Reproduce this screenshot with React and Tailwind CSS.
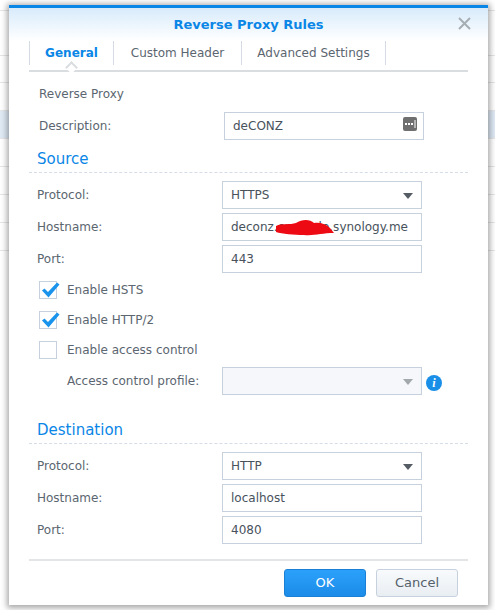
import React from 'react'

const font = "font-['DejaVu_Sans',sans-serif]"

function Field({ label, children, indent }) {
  return (
    <div className={`flex h-7 items-center ${indent ? 'pl-[58px]' : 'pl-[28px]'}`}>
      <span className="flex-1 text-[12px] text-[#5b6670]">{label}</span>
      {children}
    </div>
  )
}

function Box({ children, disabled }) {
  return (
    <div className={`relative flex h-7 w-[200px] items-center border border-[#c7d1de] pl-[8px] text-[12px] text-[#48525c] ${disabled ? 'bg-[#f5f7fa]' : 'bg-white'}`}>
      {children}
    </div>
  )
}

function Caret({ disabled }) {
  return (
    <span className={`absolute right-[8px] top-[11px] h-0 w-0 border-x-[5px] border-t-[6px] border-x-transparent ${disabled ? 'border-t-[#a3a8ad]' : 'border-t-[#555c63]'}`} />
  )
}

function Check({ checked, label }) {
  return (
    <div className="flex h-[18px] items-center pl-[30px]">
      <div className="relative h-[18px] w-[18px] border border-[#c7d1de] bg-white">
        {checked && (
          <svg className="absolute -top-[3px] left-0" width="20" height="20" viewBox="0 0 20 20">
            <path d="M2 11.5 L4.5 9.5 L8 13 L17 3.5 L19.5 5.5 L8.5 18.5 Z" fill="#1a93ec" />
          </svg>
        )}
      </div>
      <span className="ml-[10px] text-[12px] text-[#5b6670]">{label}</span>
    </div>
  )
}

function Section({ title }) {
  return (
    <div className="mx-[20px] flex h-[26px] items-center border-b border-dashed border-[#d5dee8] pl-[8px] text-[15px] text-[#0a86e6]">
      {title}
    </div>
  )
}

function Tab({ children, active, className }) {
  return (
    <div className={`relative flex h-[24px] items-center justify-center border-r border-[#d4dbe2] text-[12px] ${active ? 'font-bold text-[#0a86e6]' : 'text-[#5b6670]'} ${className}`}>
      {children}
      {active && (
        <span className="absolute -bottom-[7px] left-[37px] h-[9px] w-[9px] rotate-45 border-l-2 border-t-2 border-[#d9dde0] bg-white" />
      )}
    </div>
  )
}

export default function App() {
  const rows = ['h-[11px]', 'h-[45px]', 'h-[27px]', 'h-[28px]', 'h-[28px] bg-[#dfeaf5]', 'h-[28px]', 'h-[28px]', 'h-[28px]', 'h-[28px]']

  return (
    <div className={`relative h-[610px] w-[495px] overflow-hidden bg-white ${font}`}>
      <div className="flex flex-col">
        {rows.map((r, i) => (
          <div key={i} className={`border-b border-[#e6e6e6] ${r}`} />
        ))}
      </div>

      <div className="absolute left-[9px] top-[5px] flex h-[600px] w-[479px] flex-col border-t-[3px] border-[#0a86e6] bg-white shadow-[0_1px_6px_2px_rgba(0,0,0,0.35)]">
        <div className="relative bg-gradient-to-b from-[#d8ebfb] to-white">
          <div className="flex h-[33px] items-center justify-center text-[13px] font-bold text-[#0a86e6]">
            Reverse Proxy Rules
          </div>
          <svg className="absolute right-[17px] top-[9px]" width="13" height="13" viewBox="0 0 13 13">
            <path d="M1 1 L12 12 M12 1 L1 12" stroke="#a6adb3" strokeWidth="2" />
          </svg>
        </div>

        <div className="mx-[20px] flex h-[31px] items-start border-b-2 border-[#d9dde0]">
          <Tab active className="w-[85px] border-l">General</Tab>
          <Tab className="w-[128px]">Custom Header</Tab>
          <Tab className="w-[144px]">Advanced Settings</Tab>
        </div>

        <div className="flex h-[40px] items-center pl-[30px] pt-[3px] text-[12px] text-[#5b6670]">Reverse Proxy</div>

        <div className="flex h-7 items-center pl-[30px] pr-[64px]">
          <span className="flex-1 text-[12px] text-[#5b6670]">Description:</span>
          <Box>
            deCONZ
            <svg className="absolute right-[6px] top-[4px]" width="14" height="14" viewBox="0 0 14 14">
              <rect width="14" height="14" rx="2" fill="#6f6f6f" />
              <path d="M2 6h2v2H2zM5 6h2v2H5zM8 6h2v2H8z" fill="#fff" />
              <path d="M12 3v8" stroke="#fff" strokeWidth="1" />
            </svg>
          </Box>
        </div>

        <div className="mt-[7px]">
          <Section title="Source" />
        </div>

        <div className="mt-[8px] flex flex-col gap-[4px] pr-[66px]">
          <Field label="Protocol:"><Box>HTTPS<Caret /></Box></Field>
          <Field label="Hostname:">
            <Box>
              deconz.example.synology.me
              <svg className="absolute left-[53px] top-[6px]" width="58" height="16" viewBox="0 0 58 16">
                <path d="M0 6 C6 3 14 5 20 3 C26 -1 34 -1 38 3 C44 2 50 4 54 8 L58 13 C46 13 38 16 28 15 C18 15 6 14 0 12 Z" fill="#ee0a12" />
              </svg>
            </Box>
          </Field>
          <Field label="Port:"><Box>443</Box></Field>
        </div>

        <div className="mt-[8px] flex flex-col gap-[12px]">
          <Check checked label="Enable HSTS" />
          <Check checked label="Enable HTTP/2" />
          <Check label="Enable access control" />
        </div>

        <div className="relative mt-[8px] pr-[66px]">
          <Field label="Access control profile:" indent>
            <Box disabled><Caret disabled /></Box>
          </Field>
          <span className="absolute right-[46px] top-[8px] flex h-4 w-4 items-center justify-center rounded-full bg-[#1a8fe8] font-['Liberation_Serif',serif] text-[12px] font-bold italic leading-none text-white">
            i
          </span>
        </div>

        <div className="mt-[23px]">
          <Section title="Destination" />
        </div>

        <div className="mt-[8px] flex flex-col gap-[4px] pr-[66px]">
          <Field label="Protocol:"><Box>HTTP<Caret /></Box></Field>
          <Field label="Hostname:"><Box>localhost</Box></Field>
          <Field label="Port:"><Box>4080</Box></Field>
        </div>

        <div className="mx-[20px] mt-[15px] flex justify-end gap-[10px] border-t-2 border-[#e3e5e7] pr-[10px] pt-[8px]">
          <button className="h-7 w-[82px] rounded-[3px] border border-[#1a80d6] bg-gradient-to-b from-[#2ba1fb] to-[#1b8ce8] text-[13px] text-white">OK</button>
          <button className="h-7 w-[82px] rounded-[3px] border border-[#c7d1de] bg-gradient-to-b from-[#f8fafc] to-[#e9eef3] text-[13px] text-[#55606a]">Cancel</button>
        </div>
      </div>
    </div>
  )
}
